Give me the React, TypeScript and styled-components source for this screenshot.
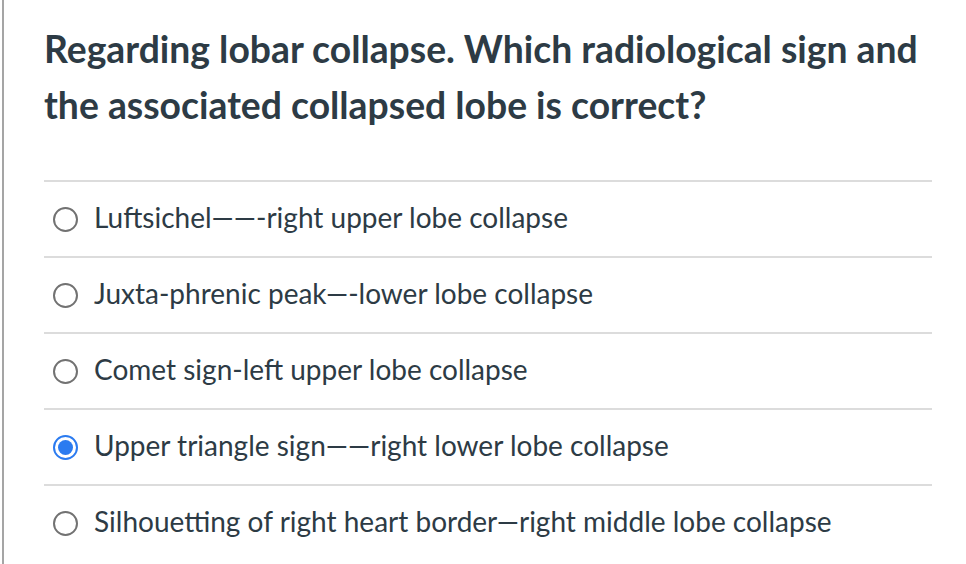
import styled, { createGlobalStyle } from "styled-components";

const answers = [
    { id: "a1", text: "Luftsichel——-right upper lobe collapse", checked: false },
    { id: "a2", text: "Juxta-phrenic peak—-lower lobe collapse", checked: false },
    { id: "a3", text: "Comet sign-left upper lobe collapse", checked: false },
    { id: "a4", text: "Upper triangle sign——right lower lobe collapse", checked: true },
    { id: "a5", text: "Silhouetting of right heart border—right middle lobe collapse", checked: false },
];

const Global = createGlobalStyle`
    html, body {
        margin:0;
        padding:0;
        background:#fff;
    }
    body {
        font-family:Lato, "Open Sans", sans-serif;
        color:#2d3b45;
    }
`;

export default function App() {
    return (
        <>
            <Global />
            <Page>
                <Question>
                    <Title>
                        Regarding lobar collapse. Which radiological sign and the associated collapsed lobe is correct?
                    </Title>
                    <AnswerList>
                        {answers.map((a) => (
                            <Answer key={a.id}>
                                <Radio $checked={a.checked} />
                                <AnswerText>{a.text}</AnswerText>
                            </Answer>
                        ))}
                    </AnswerList>
                </Question>
            </Page>
        </>
    );
}

const Page = styled.div`
    height:564px;
    margin-left:2px;
    border-left:2px solid #a5a5a5;
    box-sizing:border-box;
    overflow:hidden;
`;

const Question = styled.div`
    padding:21px 34px 0 40px;
`;

const Title = styled.h1`
    margin:0;
    font-size:37.3px;
    font-weight:bold;
    line-height:56px;
    color:#2d3b45;
`;

const AnswerList = styled.div`
    margin-top:47px;
    display:flex;
    flex-direction:column;
`;

const Answer = styled.label`
    display:flex;
    align-items:center;
    height:76px;
    border-top:2px solid #dcdcdc;
    box-sizing:border-box;
    padding-left:9px;
`;

const Radio = styled.span<{ $checked: boolean }>`
    width:25px;
    height:25px;
    box-sizing:border-box;
    border-radius:50%;
    border:2px solid ${(p) => (p.$checked ? "#2b7bf0" : "#727272")};
    flex-shrink:0;
    display:flex;
    align-items:center;
    justify-content:center;

    &::after{
        content:"";
        display:${(p) => (p.$checked ? "block" : "none")};
        width:15px;
        height:15px;
        border-radius:50%;
        background:#2b7bf0;
    }
`;

const AnswerText = styled.span`
    margin-left:16px;
    padding-bottom:5px;
    font-size:28px;
    line-height:34px;
    color:#2d3b45;
`;
